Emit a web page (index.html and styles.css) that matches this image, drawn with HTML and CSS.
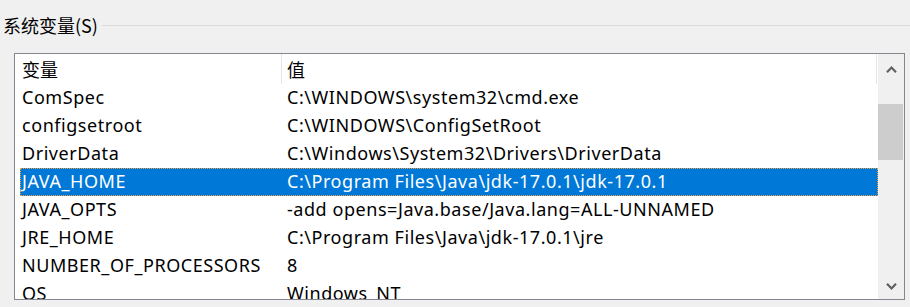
FILE: index.html
```html
<!DOCTYPE html>
<html lang="zh-CN">
<head>
<meta charset="utf-8">
<title>系统变量</title>
<link rel="stylesheet" href="styles.css">
</head>
<body>
<div class="group-head">
  <span class="group-title">系统变量(S)</span>
  <span class="group-line"></span>
</div>
<div class="listbox">
  <div class="list">
    <div class="header">
      <div class="hcell hcell-name">变量</div>
      <div class="hcell hcell-value">值</div>
    </div>
    <div class="row"><div class="cell-name">ComSpec</div><div class="cell-value">C:\WINDOWS\system32\cmd.exe</div></div>
    <div class="row"><div class="cell-name">configsetroot</div><div class="cell-value">C:\WINDOWS\ConfigSetRoot</div></div>
    <div class="row"><div class="cell-name">DriverData</div><div class="cell-value">C:\Windows\System32\Drivers\DriverData</div></div>
    <div class="row selected"><div class="cell-name">JAVA_HOME</div><div class="cell-value">C:\Program Files\Java\jdk-17.0.1\jdk-17.0.1</div></div>
    <div class="row"><div class="cell-name">JAVA_OPTS</div><div class="cell-value">-add opens=Java.base/Java.lang=ALL-UNNAMED</div></div>
    <div class="row"><div class="cell-name">JRE_HOME</div><div class="cell-value">C:\Program Files\Java\jdk-17.0.1\jre</div></div>
    <div class="row"><div class="cell-name">NUMBER_OF_PROCESSORS</div><div class="cell-value">8</div></div>
    <div class="row"><div class="cell-name">OS</div><div class="cell-value">Windows_NT</div></div>
  </div>
  <div class="scrollbar">
    <div class="sb-btn sb-up">
      <svg width="11" height="7" viewBox="0 0 11 7"><path d="M1 6.2 L5.5 1.6 L10 6.2" fill="none" stroke="#606060" stroke-width="2.2"/></svg>
    </div>
    <div class="sb-gap"></div>
    <div class="sb-thumb"></div>
    <div class="sb-track"></div>
    <div class="sb-btn sb-down">
      <svg width="11" height="7" viewBox="0 0 11 7"><path d="M1 0.8 L5.5 5.4 L10 0.8" fill="none" stroke="#606060" stroke-width="2.2"/></svg>
    </div>
  </div>
</div>
</body>
</html>
```
FILE: styles.css
```css
html, body {
  margin: 0;
  padding: 0;
}
body {
  background: #f0f0f0;
  font-family: "Noto Sans", "Noto Sans CJK SC", sans-serif;
  font-size: 18px;
  color: #000;
  width: 910px;
  height: 307px;
  overflow: hidden;
}
.group-head {
  display: flex;
  align-items: center;
  padding-top: 13px;
  height: 24px;
  line-height: 24px;
}
.group-title {
  padding-left: 3px;
  font-family: "Noto Sans CJK SC", sans-serif;
  font-size: 18px;
}
.group-line {
  flex: 1;
  height: 1px;
  background: #dcdcdc;
  margin-left: 4px;
}
.listbox {
  margin-top: 16px;
  margin-left: 14px;
  width: 891px;
  height: 247px;
  box-sizing: border-box;
  border: 1px solid #828790;
  background: #fff;
  display: flex;
  overflow: hidden;
}
.list {
  width: 863px;
  flex: none;
  overflow: hidden;
}
.header {
  display: flex;
  height: 30px;
}
.hcell {
  box-sizing: border-box;
  height: 30px;
  line-height: 30px;
  border-right: 1px solid #e5e5e5;
  font-family: "Noto Sans CJK SC", sans-serif;
}
.hcell-name {
  width: 267px;
  padding-left: 7px;
}
.hcell-value {
  width: 595px;
  padding-left: 5px;
}
.row {
  display: flex;
  height: 28px;
  line-height: 26px;
  margin-left: 5px;
  width: 858px;
  box-sizing: border-box;
  letter-spacing: 0.55px;
  white-space: nowrap;
}
.cell-name {
  width: 261px;
  padding-left: 2px;
  box-sizing: border-box;
}
.cell-value {
  padding-left: 6px;
}
.row.selected {
  background: #0078d7;
  color: #fff;
  border: 1px dotted #f0a040;
  line-height: 24px;
}
.row.selected .cell-name {
  width: 260px;
  padding-left: 1px;
}
.scrollbar {
  width: 26px;
  flex: none;
  background: #f0f0f0;
  display: flex;
  flex-direction: column;
}
.sb-btn {
  display: flex;
  align-items: center;
  justify-content: center;
  flex: none;
}
.sb-up {
  height: 30px;
}
.sb-down {
  height: 25px;
}
.sb-gap {
  height: 20px;
  flex: none;
}
.sb-thumb {
  height: 56px;
  width: 25px;
  background: #cdcdcd;
  flex: none;
}
.sb-track {
  flex: 1;
}
```
